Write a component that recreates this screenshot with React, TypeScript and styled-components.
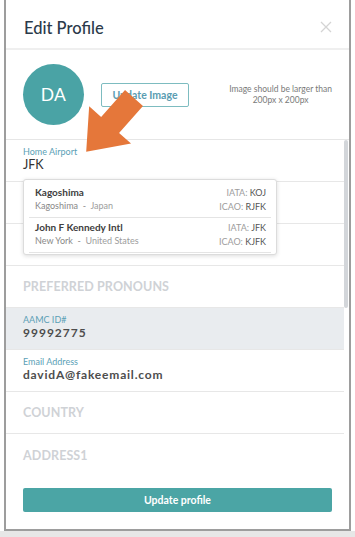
import React from 'react';
import styled, { createGlobalStyle } from 'styled-components';

const Global = createGlobalStyle`
  html, body { margin: 0; padding: 0; background: #ffffff; }
  body { font-family: Lato, "Open Sans", Arial, sans-serif; width: 355px; height: 537px; overflow: hidden; }
  * { box-sizing: border-box; }
`;

const Page = styled.div`
  position: relative;
  width: 355px;
  height: 537px;
  display: flex;
  flex-direction: column;
`;

const Modal = styled.div`
  margin-left: 4px;
  width: 347px;
  height: 531px;
  flex: none;
  border: 2px solid #9d9d9d;
  border-top: none;
  background: #fff;
  display: flex;
  flex-direction: column;
  overflow: hidden;
`;

const Backdrop = styled.div`
  flex: 1;
  background: #e7e7e7;
`;

const Header = styled.header`
  height: 50px;
  flex: none;
  display: flex;
  align-items: flex-start;
  justify-content: space-between;
  padding: 18px 17px 0 18px;
  border-bottom: 2px solid #efefef;
`;

const Title = styled.h1`
  margin: 0;
  font-size: 16.5px;
  line-height: 20px;
  font-weight: 500;
  color: #2b3a4a;
`;

const Close = styled.button`
  margin-top: 3px;
  width: 12px;
  height: 12px;
  padding: 0;
  border: none;
  background: none;
  display: flex;
`;

const ProfileSection = styled.section`
  height: 90px;
  flex: none;
  display: flex;
  align-items: center;
  padding: 0 17px;
  border-bottom: 1px solid #e6e6e6;
`;

const Avatar = styled.div`
  width: 61px;
  height: 61px;
  border-radius: 50%;
  background: #4aa3a5;
  color: #fff;
  font-size: 17.5px;
  display: flex;
  align-items: center;
  justify-content: center;
  letter-spacing: 0.3px;
`;

const OutlineButton = styled.button`
  margin-left: 17px;
  width: 88px;
  height: 24px;
  border: 1px solid #7dbcc0;
  border-radius: 2px;
  background: #fff;
  color: #5a9db2;
  font-family: inherit;
  font-size: 10.5px;
  font-weight: 700;
  padding: 0;
`;

const Note = styled.p`
  margin: 0 0 0 auto;
  text-align: center;
  font-size: 8.5px;
  line-height: 11px;
  color: #7a7a7a;
`;

const ScrollArea = styled.div`
  height: 336px;
  flex: none;
  display: flex;
`;

const Fields = styled.div`
  position: relative;
  flex: 1;
  display: flex;
  flex-direction: column;
  overflow: hidden;
`;

const ScrollTrack = styled.div`
  width: 5px;
  padding-right: 1px;
`;

const ScrollThumb = styled.div`
  width: 4px;
  height: 168px;
  background: #d3d6da;
  border-radius: 2px;
`;

const Row = styled.div<{ $shaded?: boolean; $last?: boolean }>`
  position: relative;
  height: 42px;
  flex: none;
  padding: 6px 17px 0;
  border-bottom: ${p => (p.$last ? 'none' : '1px solid #e7e7e7')};
  background: ${p => (p.$shaded ? '#e9ecef' : '#fff')};
`;

const PlaceholderRow = styled(Row)`
  padding: 0 17px;
  display: flex;
  align-items: center;
  font-size: 12.5px;
  font-weight: 700;
  color: #cfd2d6;
  letter-spacing: 0.1px;
`;

const Label = styled.div`
  font-size: 9px;
  line-height: 11px;
  color: #5b9fb6;
`;

const Value = styled.div<{ $strong?: boolean; $spacing?: number }>`
  font-size: ${p => (p.$strong ? 12 : 12.5)}px;
  line-height: 16px;
  color: ${p => (p.$strong ? '#4d4d4d' : '#333')};
  font-weight: ${p => (p.$strong ? 700 : 400)};
  letter-spacing: ${p => p.$spacing ?? 0}px;
`;

const Dropdown = styled.ul`
  position: absolute;
  top: 39px;
  left: 17px;
  width: 254px;
  margin: 0;
  padding: 3px 5px 1px;
  list-style: none;
  background: #fff;
  border: 1px solid #dcdcdc;
  border-radius: 3px;
  box-shadow: 0 1px 4px rgba(0, 0, 0, 0.14);
  z-index: 2;
`;

const Option = styled.li`
  display: flex;
  justify-content: space-between;
  padding: 3px 5px 4px 6px;
  border-bottom: 1px solid #e4e4e4;
`;

const OptionMain = styled.div`
  display: flex;
  flex-direction: column;
`;

const OptionTitle = styled.span`
  font-size: 10px;
  line-height: 13px;
  font-weight: 700;
  color: #404040;
`;

const OptionSub = styled.span`
  font-size: 9px;
  line-height: 14px;
  color: #888;
`;

const Faint = styled.span`
  color: #9d9d9d;
`;

const Codes = styled.div`
  display: flex;
  flex-direction: column;
  align-items: flex-end;
  font-size: 9px;
  line-height: 13.5px;
  color: #555;
`;

const Footer = styled.div`
  flex: 1;
  padding: 12px 17px 0;
`;

const PrimaryButton = styled.button`
  width: 100%;
  height: 24px;
  border: none;
  border-radius: 2px;
  background: #4ba5a5;
  color: #fff;
  font-family: inherit;
  font-size: 10.5px;
  font-weight: 700;
`;

const ArrowLayer = styled.svg`
  position: absolute;
  left: 0;
  top: 0;
  pointer-events: none;
  z-index: 5;
`;

type Airport = { name: string; city: string; country: string; iata: string; icao: string };

const airports: Airport[] = [
  { name: 'Kagoshima', city: 'Kagoshima', country: 'Japan', iata: 'KOJ', icao: 'RJFK' },
  { name: 'John F Kennedy Intl', city: 'New York', country: 'United States', iata: 'JFK', icao: 'KJFK' },
];

export default function App() {
  return (
    <Page>
      <Global />
      <Modal>
        <Header>
          <Title>Edit Profile</Title>
          <Close aria-label="Close">
            <svg width="12" height="12" viewBox="0 0 12 12">
              <path d="M1 1 L11 11 M11 1 L1 11" stroke="#d4d4d4" strokeWidth="1.3" fill="none" />
            </svg>
          </Close>
        </Header>
        <ProfileSection>
          <Avatar>DA</Avatar>
          <OutlineButton>Update Image</OutlineButton>
          <Note>
            Image should be larger than
            <br />
            200px x 200px
          </Note>
        </ProfileSection>
        <ScrollArea>
          <Fields>
            <Row>
              <Label>Home Airport</Label>
              <Value>JFK</Value>
              <Dropdown>
                {airports.map(a => (
                  <Option key={a.icao}>
                    <OptionMain>
                      <OptionTitle>{a.name}</OptionTitle>
                      <OptionSub>
                        {a.city} &nbsp;-&nbsp; <Faint>{a.country}</Faint>
                      </OptionSub>
                    </OptionMain>
                    <Codes>
                      <span>
                        <Faint>IATA:</Faint> {a.iata}
                      </span>
                      <span>
                        <Faint>ICAO:</Faint> {a.icao}
                      </span>
                    </Codes>
                  </Option>
                ))}
              </Dropdown>
            </Row>
            <Row />
            <Row />
            <PlaceholderRow>PREFERRED PRONOUNS</PlaceholderRow>
            <Row $shaded>
              <Label>AAMC ID#</Label>
              <Value $strong $spacing={1}>99992775</Value>
            </Row>
            <Row>
              <Label>Email Address</Label>
              <Value $strong $spacing={0.8}>davidA@fakeemail.com</Value>
            </Row>
            <PlaceholderRow>COUNTRY</PlaceholderRow>
            <PlaceholderRow $last>ADDRESS1</PlaceholderRow>
          </Fields>
          <ScrollTrack>
            <ScrollThumb />
          </ScrollTrack>
        </ScrollArea>
        <Footer>
          <PrimaryButton>Update profile</PrimaryButton>
        </Footer>
      </Modal>
      <Backdrop />
      <ArrowLayer width="355" height="537" viewBox="0 0 355 537">
        <g transform="translate(134 98) rotate(131.6)">
          <polygon points="0,-12 36,-12 36,-28 72,0 36,28 36,12 0,12" fill="#e5773a" />
        </g>
      </ArrowLayer>
    </Page>
  );
}
